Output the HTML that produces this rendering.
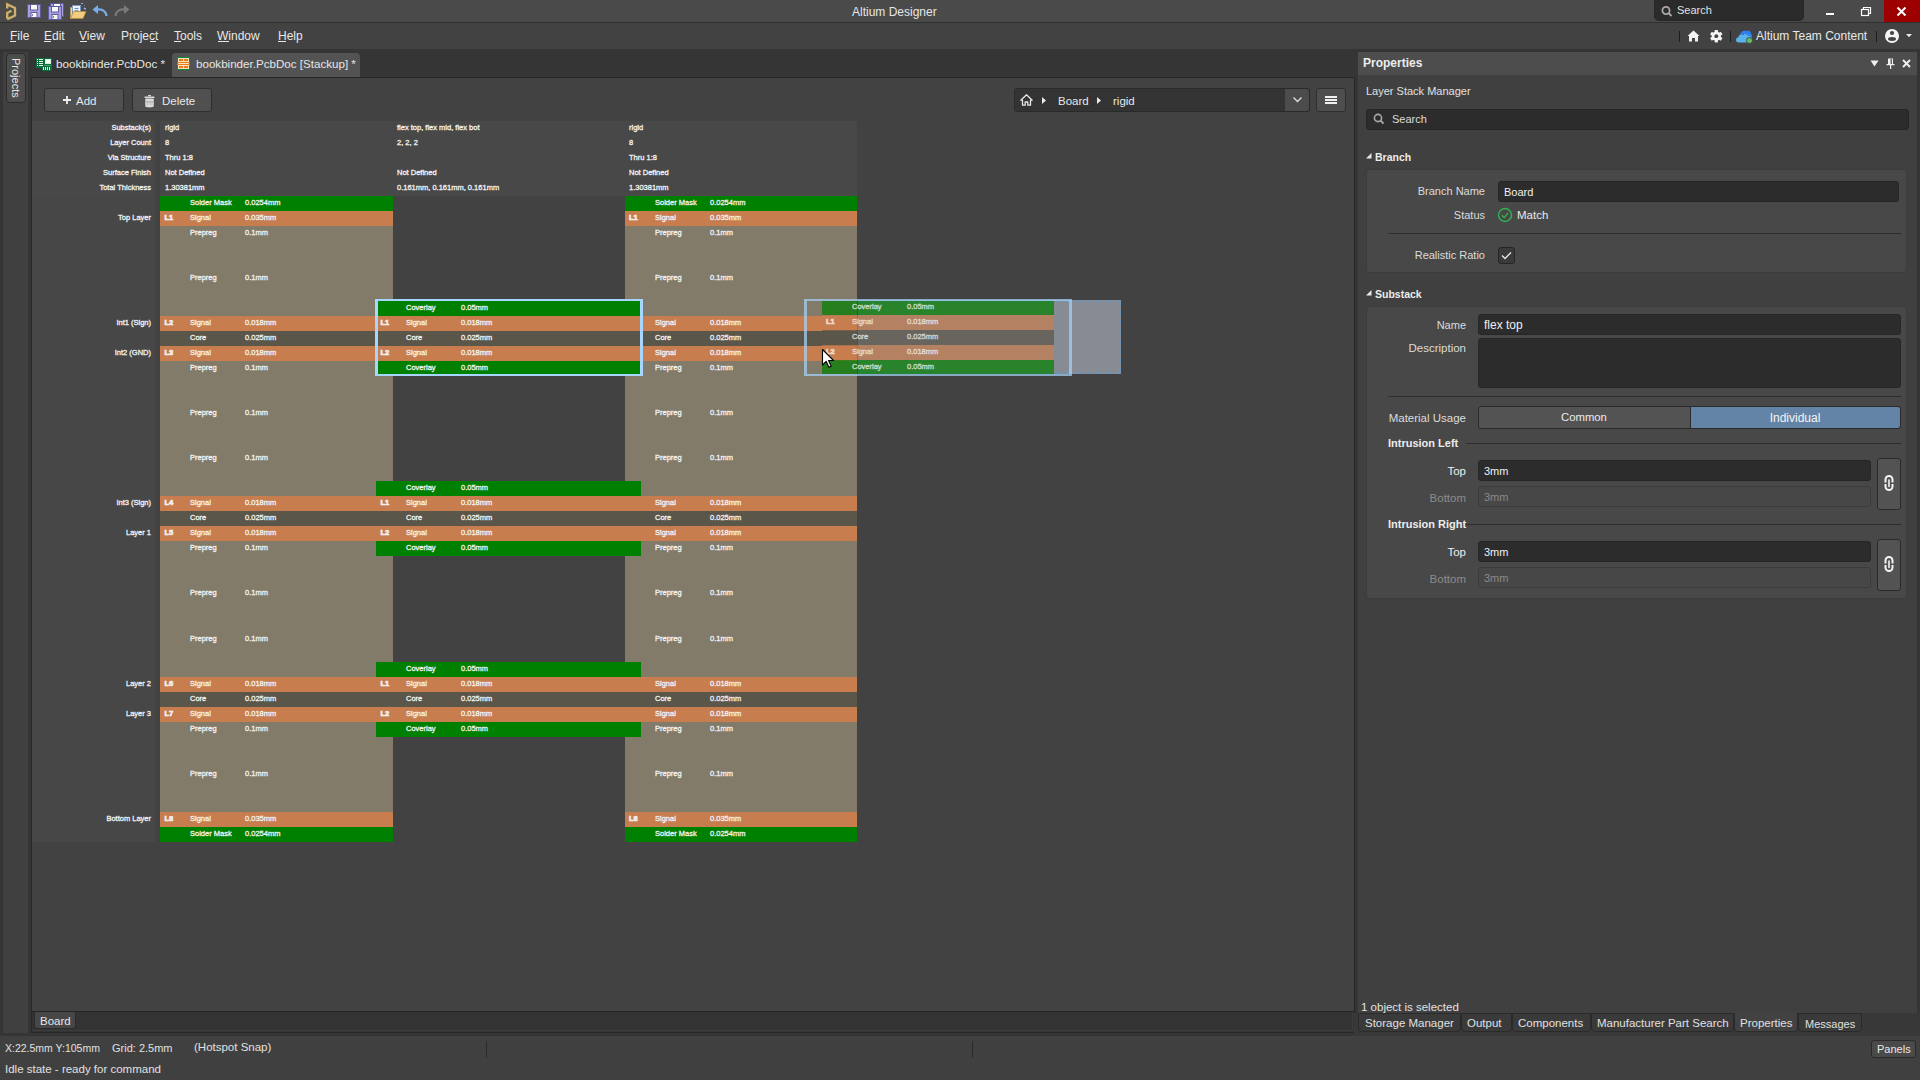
<!DOCTYPE html><html><head><meta charset="utf-8"><title>Altium Designer</title><style>
html,body{margin:0;padding:0;width:1920px;height:1080px;overflow:hidden;background:#3c3c3c;font-family:"Liberation Sans",sans-serif;}
.t{position:absolute;white-space:pre;}
.r{position:absolute;box-sizing:border-box;}
svg{position:absolute;overflow:visible;}
</style></head><body>
<div class="r" style="left:0px;top:0px;width:1920px;height:22px;background:#4a4a4a;"></div>
<div class="r" style="left:0px;top:22px;width:1920px;height:1px;background:#2f2f2f;"></div>
<div class="t" style="left:852px;top:4.64px;font-size:12px;line-height:14.4px;color:#e6e6e6;">Altium Designer</div>
<div class="r" style="left:1654px;top:0px;width:150px;height:21px;background:#2b2b2b;border-radius:0 0 5px 5px;border:1px solid #262626;border-top:none;"></div>
<svg style="left:1661px;top:6px" width="12" height="11"><circle cx="5" cy="4.5" r="3.6" fill="none" stroke="#a8a8a8" stroke-width="1.8"/><line x1="7.5" y1="7" x2="10.5" y2="10" stroke="#a8a8a8" stroke-width="2"/></svg>
<div class="t" style="left:1677px;top:3.59px;font-size:11px;line-height:13.2px;color:#e0e0e0;">Search</div>
<div class="r" style="left:1826px;top:13px;width:8px;height:2px;background:#ffffff;"></div>
<svg style="left:1860px;top:5px" width="12" height="12"><rect x="1.5" y="4.5" width="7" height="6" fill="none" stroke="#fff" stroke-width="1.2"/><path d="M3.5 4.5V2.5H10.5V8.5H8.5" fill="none" stroke="#fff" stroke-width="1.2"/></svg>
<div class="r" style="left:1884px;top:0px;width:36px;height:22px;background:#9c0000;"></div>
<svg style="left:1896px;top:6px" width="11" height="11"><path d="M1.5 1.5L9.5 9.5M9.5 1.5L1.5 9.5" stroke="#fff" stroke-width="2"/></svg>
<svg style="left:5px;top:2px" width="13" height="19"><path d="M2.2 6.5V2.3L10 6V13.5L3.2 16.8L2.2 15.5V11L6.5 8.8" fill="none" stroke="#cdb06a" stroke-width="2.4" stroke-linejoin="miter"/></svg>
<svg style="left:27px;top:4px" width="14" height="14"><rect x="0.5" y="0.5" width="13" height="13" fill="#a89ee0" stroke="#5c5c98"/><rect x="3.5" y="0.5" width="7" height="5.5" fill="#f8f8f8" stroke="#5c5c98"/><rect x="4" y="8.5" width="6" height="5" fill="#f8f8f8" stroke="#5c5c98"/><rect x="5" y="10" width="1" height="2" fill="#7a7aa8"/></svg>
<svg style="left:50px;top:3px" width="14" height="14"><rect x="0.5" y="0.5" width="13" height="13" fill="#a89ee0" stroke="#5c5c98"/><rect x="3.5" y="0.5" width="7" height="5.5" fill="#f8f8f8" stroke="#5c5c98"/><rect x="4" y="8.5" width="6" height="5" fill="#f8f8f8" stroke="#5c5c98"/><rect x="5" y="10" width="1" height="2" fill="#7a7aa8"/></svg>
<svg style="left:48px;top:6px" width="14" height="14"><rect x="0.5" y="0.5" width="13" height="13" fill="#a89ee0" stroke="#5c5c98"/><rect x="3.5" y="0.5" width="7" height="5.5" fill="#f8f8f8" stroke="#5c5c98"/><rect x="4" y="8.5" width="6" height="5" fill="#f8f8f8" stroke="#5c5c98"/><rect x="5" y="10" width="1" height="2" fill="#7a7aa8"/></svg>
<svg style="left:70px;top:3px" width="17" height="16"><path d="M0.5 4.5H3V15.5H0.5Z" fill="#e8d8a8" stroke="#c0a060" stroke-width="0.6"/><rect x="2.5" y="2.5" width="8" height="9" fill="#f4f6fa" stroke="#7c96c0" stroke-width="1"/><line x1="4.5" y1="5.5" x2="8.5" y2="5.5" stroke="#6a88b8" stroke-width="1.2"/><line x1="4.5" y1="7.8" x2="8.5" y2="7.8" stroke="#6a88b8" stroke-width="1.2"/><path d="M0.5 15.5L3.5 8.5H16L13 15.5Z" fill="#f2cc80" stroke="#b88a38" stroke-width="0.8"/><path d="M11 0.5H13M14 2L14.5 2.5M14.5 4.5L15 6.5L14 5.5L16 5.5" stroke="#8fb4dc" stroke-width="1"/></svg>
<svg style="left:92px;top:4px" width="16" height="13"><path d="M14.5 12C14 7 10 5 5 5.5" fill="none" stroke="#78aee8" stroke-width="2.2"/><path d="M0.5 5.5L6 1V10Z" fill="#78aee8"/></svg>
<svg style="left:114px;top:4px" width="16" height="13"><path d="M1.5 12C2 7 6 5 11 5.5" fill="none" stroke="#7a7a7a" stroke-width="2.2"/><path d="M15.5 5.5L10 1V10Z" fill="#7a7a7a"/></svg>
<div class="r" style="left:0px;top:23px;width:1920px;height:26px;background:#424242;"></div>
<div class="t" style="left:10px;top:28.64px;font-size:12px;line-height:14.4px;color:#e8e8e8;">File</div>
<div class="t" style="left:44px;top:28.64px;font-size:12px;line-height:14.4px;color:#e8e8e8;">Edit</div>
<div class="t" style="left:79px;top:28.64px;font-size:12px;line-height:14.4px;color:#e8e8e8;">View</div>
<div class="t" style="left:121px;top:28.64px;font-size:12px;line-height:14.4px;color:#e8e8e8;">Project</div>
<div class="t" style="left:174px;top:28.64px;font-size:12px;line-height:14.4px;color:#e8e8e8;">Tools</div>
<div class="t" style="left:217px;top:28.64px;font-size:12px;line-height:14.4px;color:#e8e8e8;">Window</div>
<div class="t" style="left:278px;top:28.64px;font-size:12px;line-height:14.4px;color:#e8e8e8;">Help</div>
<div class="r" style="left:10px;top:41px;width:6px;height:1px;background:#e8e8e8;"></div>
<div class="r" style="left:44px;top:41px;width:7px;height:1px;background:#e8e8e8;"></div>
<div class="r" style="left:80px;top:41px;width:7px;height:1px;background:#e8e8e8;"></div>
<div class="r" style="left:174px;top:41px;width:7px;height:1px;background:#e8e8e8;"></div>
<div class="r" style="left:218px;top:41px;width:11px;height:1px;background:#e8e8e8;"></div>
<div class="r" style="left:278px;top:41px;width:8px;height:1px;background:#e8e8e8;"></div>
<div class="r" style="left:150px;top:41px;width:6px;height:1px;background:#e8e8e8;"></div>
<div class="r" style="left:1679px;top:31px;width:1px;height:11px;background:#1c1c1c;"></div>
<div class="r" style="left:1730px;top:31px;width:1px;height:11px;background:#1c1c1c;"></div>
<div class="r" style="left:1876px;top:31px;width:1px;height:11px;background:#1c1c1c;"></div>
<svg style="left:1687px;top:30px" width="13" height="12"><path d="M6.5 0.5L0.5 6H2V11.5H5V8H8V11.5H11V6H12.5Z" fill="#f2f2f2"/></svg>
<svg style="left:1709px;top:29px" width="15" height="15"><g fill="#f4f4f4" transform="translate(7.3 7.2)"><circle r="4.6"/><rect x="-1.6" y="-6.2" width="3.2" height="12.4"/><rect x="-1.6" y="-6.2" width="3.2" height="12.4" transform="rotate(60)"/><rect x="-1.6" y="-6.2" width="3.2" height="12.4" transform="rotate(-60)"/></g><circle cx="7.3" cy="7.2" r="1.9" fill="#424242"/></svg>
<svg style="left:1735px;top:29px" width="18" height="15"><path d="M3.5 13.5C0.3 13.5 0.2 8.6 3.4 8.3C3.8 5.6 6.5 4.6 8.5 6C9.5 2.2 14 1.5 15.5 5C16.8 6 17.2 8 16.8 9.5L15.5 13.5Z" fill="#5ab2ec"/><path d="M5 5.3C6 2.5 9 0.8 11 2.2C13 0.5 16 2 16.3 5.2C17.5 6 17.3 8.5 16.5 9.5C15.8 7 14 6 12.5 6.5C11.5 4.8 9 4.5 8 6C7 5.3 6 5.2 5 5.3Z" fill="#2f7ef2"/><circle cx="14.5" cy="11.5" r="3" fill="#5cc060" stroke="#424242" stroke-width="0.9"/></svg>
<div class="t" style="left:1756px;top:28.64px;font-size:12px;line-height:14.4px;color:#e8e8e8;">Altium Team Content</div>
<svg style="left:1884px;top:28px" width="16" height="16"><circle cx="8" cy="8" r="7" fill="#f4f4f4"/><circle cx="8" cy="5" r="2.1" fill="#424242"/><ellipse cx="8" cy="11" rx="4" ry="1.9" fill="#424242"/></svg>
<svg style="left:1906px;top:34px" width="7" height="4"><path d="M0 0H6L3 3.2Z" fill="#e8e8e8"/></svg>
<div class="r" style="left:0px;top:49px;width:1920px;height:987px;background:#353535;"></div>
<div class="r" style="left:3px;top:52px;width:25px;height:981px;background:#404040;"></div>
<div class="r" style="left:6px;top:53px;width:20px;height:50px;background:#4d4d4d;border-radius:4px;border:1px solid #2c2c2c;"></div>
<div class="t" style="left:8px;top:58px;width:16px;height:44px;"><div style="position:absolute;left:0;top:0;transform-origin:0 0;transform:translate(15px,0) rotate(90deg);font-size:11px;line-height:14px;color:#e6e6e6;white-space:pre">Projects</div></div>
<svg style="left:36px;top:58px" width="16" height="13" shape-rendering="crispEdges"><path d="M0 0H16V13H6V10H0Z" fill="#0b6c3c"/><g fill="#eef6f0"><rect x="1" y="1" width="1" height="1"/><rect x="3" y="1" width="4" height="1"/><rect x="1" y="3" width="1" height="1"/><rect x="3" y="3" width="4" height="1"/><rect x="1" y="5" width="1" height="1"/><rect x="3" y="5" width="4" height="1"/><rect x="1" y="7" width="1" height="1"/><rect x="3" y="7" width="4" height="1"/></g><rect x="9" y="1" width="6" height="5" fill="#d8eee0"/><rect x="10" y="2" width="4" height="3" fill="#f4fbf6"/><rect x="8" y="7" width="7" height="1" fill="#3aa070"/><g fill="#f4f0c8"><rect x="7" y="9" width="1" height="3"/><rect x="9" y="9" width="1" height="3"/><rect x="11" y="9" width="1" height="3"/><rect x="13" y="9" width="1" height="3"/></g></svg>
<div class="t" style="left:56px;top:56.93px;font-size:11.7px;line-height:14.04px;color:#e6e6e6;">bookbinder.PcbDoc *</div>
<div class="r" style="left:172px;top:53px;width:188px;height:24px;background:#535353;border-radius:4px 4px 0 0;"></div>
<svg style="left:177px;top:57px" width="13" height="13"><rect x="0" y="0" width="13" height="13" fill="#0e8a3a"/><rect x="1" y="1" width="11" height="11" fill="#f4e6b8"/><rect x="2" y="2" width="4" height="2" fill="#f07a20"/><rect x="7" y="2" width="4" height="2" fill="#f07a20"/><rect x="0" y="5" width="13" height="1" fill="#f07a20"/><rect x="0" y="7" width="13" height="1" fill="#f07a20"/><rect x="2" y="9" width="4" height="2" fill="#f07a20"/><rect x="7" y="9" width="4" height="2" fill="#f07a20"/></svg>
<div class="t" style="left:196px;top:57.02px;font-size:11.6px;line-height:13.92px;color:#e6e6e6;">bookbinder.PcbDoc [Stackup] *</div>
<div class="r" style="left:31px;top:77px;width:1324px;height:956px;background:#262626;"></div>
<div class="r" style="left:32px;top:78px;width:1322px;height:933px;background:#424242;"></div>
<div class="r" style="left:44px;top:88px;width:80px;height:24px;background:#505050;border:1px solid #2f2f2f;border-radius:3px;"></div>
<svg style="left:63px;top:96px" width="8" height="8"><path d="M4 0V8M0 4H8" stroke="#f0f0f0" stroke-width="1.8"/></svg>
<div class="t" style="left:76px;top:95.12px;font-size:11.5px;line-height:13.8px;color:#e8e8e8;">Add</div>
<div class="r" style="left:132px;top:88px;width:80px;height:24px;background:#505050;border:1px solid #2f2f2f;border-radius:3px;"></div>
<svg style="left:144px;top:94px" width="11" height="14"><path d="M4 1H7V2.2H4Z" fill="#d8d8d8"/><rect x="0.5" y="2.5" width="10" height="1.6" rx="0.6" fill="#d8d8d8"/><path d="M1.5 4.6H9.5C10 6.5 10 10.5 9.5 12.8C8 13.6 3 13.6 1.5 12.8C1 10.5 1 6.5 1.5 4.6Z" fill="#dcdcdc"/><rect x="1.2" y="7.2" width="8.6" height="1.3" fill="#a8a8a8"/><rect x="1.2" y="9.6" width="8.6" height="0.9" fill="#bdbdbd"/></svg>
<div class="t" style="left:162px;top:95.12px;font-size:11.5px;line-height:13.8px;color:#e8e8e8;">Delete</div>
<div class="r" style="left:1014px;top:88px;width:296px;height:24px;background:#333333;border:1px solid #2a2a2a;border-radius:3px;"></div>
<div class="r" style="left:1285px;top:89px;width:24px;height:22px;background:#4c4c4c;border-radius:0 3px 3px 0;"></div>
<svg style="left:1293px;top:97px" width="10" height="6"><path d="M0.5 0.5L4.5 4.5L8.5 0.5" fill="none" stroke="#e0e0e0" stroke-width="1.3"/></svg>
<svg style="left:1020px;top:94px" width="13" height="12"><path d="M6.5 0.8L0.8 6.2H2.5V11.2H5.2V8H7.8V11.2H10.5V6.2H12.2Z" fill="none" stroke="#e8e8e8" stroke-width="1.3" stroke-linejoin="round"/></svg>
<svg style="left:1042px;top:97px" width="4" height="7"><path d="M0 0L4 3.5L0 7Z" fill="#e8e8e8"/></svg>
<div class="t" style="left:1058px;top:95.12px;font-size:11.5px;line-height:13.8px;color:#e8e8e8;">Board</div>
<svg style="left:1097px;top:97px" width="4" height="7"><path d="M0 0L4 3.5L0 7Z" fill="#e8e8e8"/></svg>
<div class="t" style="left:1113px;top:95.12px;font-size:11.5px;line-height:13.8px;color:#e8e8e8;">rigid</div>
<div class="r" style="left:1316px;top:88px;width:30px;height:24px;background:#4e4e4e;border:1px solid #2e2e2e;border-radius:3px;"></div>
<div class="r" style="left:1325px;top:96px;width:12px;height:2px;background:#f0f0f0;"></div>
<div class="r" style="left:1325px;top:99px;width:12px;height:2px;background:#f0f0f0;"></div>
<div class="r" style="left:1325px;top:102px;width:12px;height:2px;background:#f0f0f0;"></div>
<div class="r" style="left:32px;top:121px;width:825px;height:75px;background:#484848;"></div>
<div class="r" style="left:155px;top:121px;width:5px;height:75px;background:#424242;"></div>
<div class="r" style="left:32px;top:196px;width:123px;height:646px;background:#474747;"></div>
<div class="t" style="right:1769px;top:122.90px;font-size:7.5px;line-height:9.0px;color:#f2f2f2;-webkit-text-stroke:0.3px #f2f2f2;">Substack(s)</div>
<div class="t" style="left:165px;top:122.90px;font-size:7.5px;line-height:9.0px;color:#f2f2f2;-webkit-text-stroke:0.3px #f2f2f2;">rigid</div>
<div class="t" style="left:397px;top:122.90px;font-size:7.5px;line-height:9.0px;color:#f2f2f2;-webkit-text-stroke:0.3px #f2f2f2;">flex top, flex mid, flex bot</div>
<div class="t" style="left:629px;top:122.90px;font-size:7.5px;line-height:9.0px;color:#f2f2f2;-webkit-text-stroke:0.3px #f2f2f2;">rigid</div>
<div class="t" style="right:1769px;top:137.90px;font-size:7.5px;line-height:9.0px;color:#f2f2f2;-webkit-text-stroke:0.3px #f2f2f2;">Layer Count</div>
<div class="t" style="left:165px;top:137.90px;font-size:7.5px;line-height:9.0px;color:#f2f2f2;-webkit-text-stroke:0.3px #f2f2f2;">8</div>
<div class="t" style="left:397px;top:137.90px;font-size:7.5px;line-height:9.0px;color:#f2f2f2;-webkit-text-stroke:0.3px #f2f2f2;">2, 2, 2</div>
<div class="t" style="left:629px;top:137.90px;font-size:7.5px;line-height:9.0px;color:#f2f2f2;-webkit-text-stroke:0.3px #f2f2f2;">8</div>
<div class="t" style="right:1769px;top:152.90px;font-size:7.5px;line-height:9.0px;color:#f2f2f2;-webkit-text-stroke:0.3px #f2f2f2;">Via Structure</div>
<div class="t" style="left:165px;top:152.90px;font-size:7.5px;line-height:9.0px;color:#f2f2f2;-webkit-text-stroke:0.3px #f2f2f2;">Thru 1:8</div>
<div class="t" style="left:629px;top:152.90px;font-size:7.5px;line-height:9.0px;color:#f2f2f2;-webkit-text-stroke:0.3px #f2f2f2;">Thru 1:8</div>
<div class="t" style="right:1769px;top:167.90px;font-size:7.5px;line-height:9.0px;color:#f2f2f2;-webkit-text-stroke:0.3px #f2f2f2;">Surface Finish</div>
<div class="t" style="left:165px;top:167.90px;font-size:7.5px;line-height:9.0px;color:#f2f2f2;-webkit-text-stroke:0.3px #f2f2f2;">Not Defined</div>
<div class="t" style="left:397px;top:167.90px;font-size:7.5px;line-height:9.0px;color:#f2f2f2;-webkit-text-stroke:0.3px #f2f2f2;">Not Defined</div>
<div class="t" style="left:629px;top:167.90px;font-size:7.5px;line-height:9.0px;color:#f2f2f2;-webkit-text-stroke:0.3px #f2f2f2;">Not Defined</div>
<div class="t" style="right:1769px;top:182.90px;font-size:7.5px;line-height:9.0px;color:#f2f2f2;-webkit-text-stroke:0.3px #f2f2f2;">Total Thickness</div>
<div class="t" style="left:165px;top:182.90px;font-size:7.5px;line-height:9.0px;color:#f2f2f2;-webkit-text-stroke:0.3px #f2f2f2;">1.30381mm</div>
<div class="t" style="left:397px;top:182.90px;font-size:7.5px;line-height:9.0px;color:#f2f2f2;-webkit-text-stroke:0.3px #f2f2f2;">0.161mm, 0.161mm, 0.161mm</div>
<div class="t" style="left:629px;top:182.90px;font-size:7.5px;line-height:9.0px;color:#f2f2f2;-webkit-text-stroke:0.3px #f2f2f2;">1.30381mm</div>
<div class="r" style="left:858px;top:300px;width:263px;height:74px;background:#878b93;border:2px dashed #7393b3;"></div>
<div class="r" style="left:160px;top:196px;width:233px;height:15px;background:#008000;"></div>
<div class="r" style="left:625px;top:196px;width:232px;height:15px;background:#008000;"></div>
<div class="r" style="left:160px;top:211px;width:233px;height:15px;background:#c87d4e;"></div>
<div class="r" style="left:625px;top:211px;width:232px;height:15px;background:#c87d4e;"></div>
<div class="r" style="left:160px;top:226px;width:233px;height:45px;background:#827b69;"></div>
<div class="r" style="left:625px;top:226px;width:232px;height:45px;background:#827b69;"></div>
<div class="r" style="left:160px;top:271px;width:233px;height:45px;background:#827b69;"></div>
<div class="r" style="left:625px;top:271px;width:232px;height:45px;background:#827b69;"></div>
<div class="r" style="left:160px;top:316px;width:697px;height:15px;background:#c87d4e;"></div>
<div class="r" style="left:160px;top:331px;width:697px;height:15px;background:#5a5649;"></div>
<div class="r" style="left:160px;top:346px;width:697px;height:15px;background:#c87d4e;"></div>
<div class="r" style="left:160px;top:361px;width:233px;height:45px;background:#827b69;"></div>
<div class="r" style="left:625px;top:361px;width:232px;height:45px;background:#827b69;"></div>
<div class="r" style="left:160px;top:406px;width:233px;height:45px;background:#827b69;"></div>
<div class="r" style="left:625px;top:406px;width:232px;height:45px;background:#827b69;"></div>
<div class="r" style="left:160px;top:451px;width:233px;height:45px;background:#827b69;"></div>
<div class="r" style="left:625px;top:451px;width:232px;height:45px;background:#827b69;"></div>
<div class="r" style="left:160px;top:496px;width:697px;height:15px;background:#c87d4e;"></div>
<div class="r" style="left:160px;top:511px;width:697px;height:15px;background:#5a5649;"></div>
<div class="r" style="left:160px;top:526px;width:697px;height:15px;background:#c87d4e;"></div>
<div class="r" style="left:160px;top:541px;width:233px;height:45px;background:#827b69;"></div>
<div class="r" style="left:625px;top:541px;width:232px;height:45px;background:#827b69;"></div>
<div class="r" style="left:160px;top:586px;width:233px;height:46px;background:#827b69;"></div>
<div class="r" style="left:625px;top:586px;width:232px;height:46px;background:#827b69;"></div>
<div class="r" style="left:160px;top:632px;width:233px;height:45px;background:#827b69;"></div>
<div class="r" style="left:625px;top:632px;width:232px;height:45px;background:#827b69;"></div>
<div class="r" style="left:160px;top:677px;width:697px;height:15px;background:#c87d4e;"></div>
<div class="r" style="left:160px;top:692px;width:697px;height:15px;background:#5a5649;"></div>
<div class="r" style="left:160px;top:707px;width:697px;height:15px;background:#c87d4e;"></div>
<div class="r" style="left:160px;top:722px;width:233px;height:45px;background:#827b69;"></div>
<div class="r" style="left:625px;top:722px;width:232px;height:45px;background:#827b69;"></div>
<div class="r" style="left:160px;top:767px;width:233px;height:45px;background:#827b69;"></div>
<div class="r" style="left:625px;top:767px;width:232px;height:45px;background:#827b69;"></div>
<div class="r" style="left:160px;top:812px;width:233px;height:15px;background:#c87d4e;"></div>
<div class="r" style="left:625px;top:812px;width:232px;height:15px;background:#c87d4e;"></div>
<div class="r" style="left:160px;top:827px;width:233px;height:15px;background:#008000;"></div>
<div class="r" style="left:625px;top:827px;width:232px;height:15px;background:#008000;"></div>
<div class="r" style="left:376px;top:301px;width:265px;height:15px;background:#008000;"></div>
<div class="r" style="left:376px;top:361px;width:265px;height:15px;background:#008000;"></div>
<div class="r" style="left:376px;top:481px;width:265px;height:15px;background:#008000;"></div>
<div class="r" style="left:376px;top:541px;width:265px;height:15px;background:#008000;"></div>
<div class="r" style="left:376px;top:662px;width:265px;height:15px;background:#008000;"></div>
<div class="r" style="left:376px;top:722px;width:265px;height:15px;background:#008000;"></div>
<div class="t" style="left:190px;top:197.90px;font-size:7.5px;line-height:9.0px;color:#f2f2f2;-webkit-text-stroke:0.3px #f2f2f2;">Solder Mask</div>
<div class="t" style="left:245px;top:197.90px;font-size:7.5px;line-height:9.0px;color:#f2f2f2;-webkit-text-stroke:0.3px #f2f2f2;">0.0254mm</div>
<div class="t" style="left:655px;top:197.90px;font-size:7.5px;line-height:9.0px;color:#f2f2f2;-webkit-text-stroke:0.3px #f2f2f2;">Solder Mask</div>
<div class="t" style="left:710px;top:197.90px;font-size:7.5px;line-height:9.0px;color:#f2f2f2;-webkit-text-stroke:0.3px #f2f2f2;">0.0254mm</div>
<div class="t" style="left:164.5px;top:212.90px;font-size:7.5px;line-height:9.0px;font-weight:700;color:#f2f2f2;-webkit-text-stroke:0.6px #f2f2f2;">L1</div>
<div class="t" style="left:190px;top:212.90px;font-size:7.5px;line-height:9.0px;color:#f2f2f2;-webkit-text-stroke:0.3px #f2f2f2;">Signal</div>
<div class="t" style="left:245px;top:212.90px;font-size:7.5px;line-height:9.0px;color:#f2f2f2;-webkit-text-stroke:0.3px #f2f2f2;">0.035mm</div>
<div class="t" style="left:629px;top:212.90px;font-size:7.5px;line-height:9.0px;font-weight:700;color:#f2f2f2;-webkit-text-stroke:0.6px #f2f2f2;">L1</div>
<div class="t" style="left:655px;top:212.90px;font-size:7.5px;line-height:9.0px;color:#f2f2f2;-webkit-text-stroke:0.3px #f2f2f2;">Signal</div>
<div class="t" style="left:710px;top:212.90px;font-size:7.5px;line-height:9.0px;color:#f2f2f2;-webkit-text-stroke:0.3px #f2f2f2;">0.035mm</div>
<div class="t" style="left:190px;top:227.90px;font-size:7.5px;line-height:9.0px;color:#f2f2f2;-webkit-text-stroke:0.3px #f2f2f2;">Prepreg</div>
<div class="t" style="left:245px;top:227.90px;font-size:7.5px;line-height:9.0px;color:#f2f2f2;-webkit-text-stroke:0.3px #f2f2f2;">0.1mm</div>
<div class="t" style="left:655px;top:227.90px;font-size:7.5px;line-height:9.0px;color:#f2f2f2;-webkit-text-stroke:0.3px #f2f2f2;">Prepreg</div>
<div class="t" style="left:710px;top:227.90px;font-size:7.5px;line-height:9.0px;color:#f2f2f2;-webkit-text-stroke:0.3px #f2f2f2;">0.1mm</div>
<div class="t" style="left:190px;top:272.90px;font-size:7.5px;line-height:9.0px;color:#f2f2f2;-webkit-text-stroke:0.3px #f2f2f2;">Prepreg</div>
<div class="t" style="left:245px;top:272.90px;font-size:7.5px;line-height:9.0px;color:#f2f2f2;-webkit-text-stroke:0.3px #f2f2f2;">0.1mm</div>
<div class="t" style="left:655px;top:272.90px;font-size:7.5px;line-height:9.0px;color:#f2f2f2;-webkit-text-stroke:0.3px #f2f2f2;">Prepreg</div>
<div class="t" style="left:710px;top:272.90px;font-size:7.5px;line-height:9.0px;color:#f2f2f2;-webkit-text-stroke:0.3px #f2f2f2;">0.1mm</div>
<div class="t" style="left:164.5px;top:317.90px;font-size:7.5px;line-height:9.0px;font-weight:700;color:#f2f2f2;-webkit-text-stroke:0.6px #f2f2f2;">L2</div>
<div class="t" style="left:190px;top:317.90px;font-size:7.5px;line-height:9.0px;color:#f2f2f2;-webkit-text-stroke:0.3px #f2f2f2;">Signal</div>
<div class="t" style="left:245px;top:317.90px;font-size:7.5px;line-height:9.0px;color:#f2f2f2;-webkit-text-stroke:0.3px #f2f2f2;">0.018mm</div>
<div class="t" style="left:655px;top:317.90px;font-size:7.5px;line-height:9.0px;color:#f2f2f2;-webkit-text-stroke:0.3px #f2f2f2;">Signal</div>
<div class="t" style="left:710px;top:317.90px;font-size:7.5px;line-height:9.0px;color:#f2f2f2;-webkit-text-stroke:0.3px #f2f2f2;">0.018mm</div>
<div class="t" style="left:190px;top:332.90px;font-size:7.5px;line-height:9.0px;color:#f2f2f2;-webkit-text-stroke:0.3px #f2f2f2;">Core</div>
<div class="t" style="left:245px;top:332.90px;font-size:7.5px;line-height:9.0px;color:#f2f2f2;-webkit-text-stroke:0.3px #f2f2f2;">0.025mm</div>
<div class="t" style="left:655px;top:332.90px;font-size:7.5px;line-height:9.0px;color:#f2f2f2;-webkit-text-stroke:0.3px #f2f2f2;">Core</div>
<div class="t" style="left:710px;top:332.90px;font-size:7.5px;line-height:9.0px;color:#f2f2f2;-webkit-text-stroke:0.3px #f2f2f2;">0.025mm</div>
<div class="t" style="left:164.5px;top:347.90px;font-size:7.5px;line-height:9.0px;font-weight:700;color:#f2f2f2;-webkit-text-stroke:0.6px #f2f2f2;">L3</div>
<div class="t" style="left:190px;top:347.90px;font-size:7.5px;line-height:9.0px;color:#f2f2f2;-webkit-text-stroke:0.3px #f2f2f2;">Signal</div>
<div class="t" style="left:245px;top:347.90px;font-size:7.5px;line-height:9.0px;color:#f2f2f2;-webkit-text-stroke:0.3px #f2f2f2;">0.018mm</div>
<div class="t" style="left:655px;top:347.90px;font-size:7.5px;line-height:9.0px;color:#f2f2f2;-webkit-text-stroke:0.3px #f2f2f2;">Signal</div>
<div class="t" style="left:710px;top:347.90px;font-size:7.5px;line-height:9.0px;color:#f2f2f2;-webkit-text-stroke:0.3px #f2f2f2;">0.018mm</div>
<div class="t" style="left:190px;top:362.90px;font-size:7.5px;line-height:9.0px;color:#f2f2f2;-webkit-text-stroke:0.3px #f2f2f2;">Prepreg</div>
<div class="t" style="left:245px;top:362.90px;font-size:7.5px;line-height:9.0px;color:#f2f2f2;-webkit-text-stroke:0.3px #f2f2f2;">0.1mm</div>
<div class="t" style="left:655px;top:362.90px;font-size:7.5px;line-height:9.0px;color:#f2f2f2;-webkit-text-stroke:0.3px #f2f2f2;">Prepreg</div>
<div class="t" style="left:710px;top:362.90px;font-size:7.5px;line-height:9.0px;color:#f2f2f2;-webkit-text-stroke:0.3px #f2f2f2;">0.1mm</div>
<div class="t" style="left:190px;top:407.90px;font-size:7.5px;line-height:9.0px;color:#f2f2f2;-webkit-text-stroke:0.3px #f2f2f2;">Prepreg</div>
<div class="t" style="left:245px;top:407.90px;font-size:7.5px;line-height:9.0px;color:#f2f2f2;-webkit-text-stroke:0.3px #f2f2f2;">0.1mm</div>
<div class="t" style="left:655px;top:407.90px;font-size:7.5px;line-height:9.0px;color:#f2f2f2;-webkit-text-stroke:0.3px #f2f2f2;">Prepreg</div>
<div class="t" style="left:710px;top:407.90px;font-size:7.5px;line-height:9.0px;color:#f2f2f2;-webkit-text-stroke:0.3px #f2f2f2;">0.1mm</div>
<div class="t" style="left:190px;top:452.90px;font-size:7.5px;line-height:9.0px;color:#f2f2f2;-webkit-text-stroke:0.3px #f2f2f2;">Prepreg</div>
<div class="t" style="left:245px;top:452.90px;font-size:7.5px;line-height:9.0px;color:#f2f2f2;-webkit-text-stroke:0.3px #f2f2f2;">0.1mm</div>
<div class="t" style="left:655px;top:452.90px;font-size:7.5px;line-height:9.0px;color:#f2f2f2;-webkit-text-stroke:0.3px #f2f2f2;">Prepreg</div>
<div class="t" style="left:710px;top:452.90px;font-size:7.5px;line-height:9.0px;color:#f2f2f2;-webkit-text-stroke:0.3px #f2f2f2;">0.1mm</div>
<div class="t" style="left:164.5px;top:497.90px;font-size:7.5px;line-height:9.0px;font-weight:700;color:#f2f2f2;-webkit-text-stroke:0.6px #f2f2f2;">L4</div>
<div class="t" style="left:190px;top:497.90px;font-size:7.5px;line-height:9.0px;color:#f2f2f2;-webkit-text-stroke:0.3px #f2f2f2;">Signal</div>
<div class="t" style="left:245px;top:497.90px;font-size:7.5px;line-height:9.0px;color:#f2f2f2;-webkit-text-stroke:0.3px #f2f2f2;">0.018mm</div>
<div class="t" style="left:655px;top:497.90px;font-size:7.5px;line-height:9.0px;color:#f2f2f2;-webkit-text-stroke:0.3px #f2f2f2;">Signal</div>
<div class="t" style="left:710px;top:497.90px;font-size:7.5px;line-height:9.0px;color:#f2f2f2;-webkit-text-stroke:0.3px #f2f2f2;">0.018mm</div>
<div class="t" style="left:190px;top:512.90px;font-size:7.5px;line-height:9.0px;color:#f2f2f2;-webkit-text-stroke:0.3px #f2f2f2;">Core</div>
<div class="t" style="left:245px;top:512.90px;font-size:7.5px;line-height:9.0px;color:#f2f2f2;-webkit-text-stroke:0.3px #f2f2f2;">0.025mm</div>
<div class="t" style="left:655px;top:512.90px;font-size:7.5px;line-height:9.0px;color:#f2f2f2;-webkit-text-stroke:0.3px #f2f2f2;">Core</div>
<div class="t" style="left:710px;top:512.90px;font-size:7.5px;line-height:9.0px;color:#f2f2f2;-webkit-text-stroke:0.3px #f2f2f2;">0.025mm</div>
<div class="t" style="left:164.5px;top:527.90px;font-size:7.5px;line-height:9.0px;font-weight:700;color:#f2f2f2;-webkit-text-stroke:0.6px #f2f2f2;">L5</div>
<div class="t" style="left:190px;top:527.90px;font-size:7.5px;line-height:9.0px;color:#f2f2f2;-webkit-text-stroke:0.3px #f2f2f2;">Signal</div>
<div class="t" style="left:245px;top:527.90px;font-size:7.5px;line-height:9.0px;color:#f2f2f2;-webkit-text-stroke:0.3px #f2f2f2;">0.018mm</div>
<div class="t" style="left:655px;top:527.90px;font-size:7.5px;line-height:9.0px;color:#f2f2f2;-webkit-text-stroke:0.3px #f2f2f2;">Signal</div>
<div class="t" style="left:710px;top:527.90px;font-size:7.5px;line-height:9.0px;color:#f2f2f2;-webkit-text-stroke:0.3px #f2f2f2;">0.018mm</div>
<div class="t" style="left:190px;top:542.90px;font-size:7.5px;line-height:9.0px;color:#f2f2f2;-webkit-text-stroke:0.3px #f2f2f2;">Prepreg</div>
<div class="t" style="left:245px;top:542.90px;font-size:7.5px;line-height:9.0px;color:#f2f2f2;-webkit-text-stroke:0.3px #f2f2f2;">0.1mm</div>
<div class="t" style="left:655px;top:542.90px;font-size:7.5px;line-height:9.0px;color:#f2f2f2;-webkit-text-stroke:0.3px #f2f2f2;">Prepreg</div>
<div class="t" style="left:710px;top:542.90px;font-size:7.5px;line-height:9.0px;color:#f2f2f2;-webkit-text-stroke:0.3px #f2f2f2;">0.1mm</div>
<div class="t" style="left:190px;top:587.90px;font-size:7.5px;line-height:9.0px;color:#f2f2f2;-webkit-text-stroke:0.3px #f2f2f2;">Prepreg</div>
<div class="t" style="left:245px;top:587.90px;font-size:7.5px;line-height:9.0px;color:#f2f2f2;-webkit-text-stroke:0.3px #f2f2f2;">0.1mm</div>
<div class="t" style="left:655px;top:587.90px;font-size:7.5px;line-height:9.0px;color:#f2f2f2;-webkit-text-stroke:0.3px #f2f2f2;">Prepreg</div>
<div class="t" style="left:710px;top:587.90px;font-size:7.5px;line-height:9.0px;color:#f2f2f2;-webkit-text-stroke:0.3px #f2f2f2;">0.1mm</div>
<div class="t" style="left:190px;top:633.90px;font-size:7.5px;line-height:9.0px;color:#f2f2f2;-webkit-text-stroke:0.3px #f2f2f2;">Prepreg</div>
<div class="t" style="left:245px;top:633.90px;font-size:7.5px;line-height:9.0px;color:#f2f2f2;-webkit-text-stroke:0.3px #f2f2f2;">0.1mm</div>
<div class="t" style="left:655px;top:633.90px;font-size:7.5px;line-height:9.0px;color:#f2f2f2;-webkit-text-stroke:0.3px #f2f2f2;">Prepreg</div>
<div class="t" style="left:710px;top:633.90px;font-size:7.5px;line-height:9.0px;color:#f2f2f2;-webkit-text-stroke:0.3px #f2f2f2;">0.1mm</div>
<div class="t" style="left:164.5px;top:678.90px;font-size:7.5px;line-height:9.0px;font-weight:700;color:#f2f2f2;-webkit-text-stroke:0.6px #f2f2f2;">L6</div>
<div class="t" style="left:190px;top:678.90px;font-size:7.5px;line-height:9.0px;color:#f2f2f2;-webkit-text-stroke:0.3px #f2f2f2;">Signal</div>
<div class="t" style="left:245px;top:678.90px;font-size:7.5px;line-height:9.0px;color:#f2f2f2;-webkit-text-stroke:0.3px #f2f2f2;">0.018mm</div>
<div class="t" style="left:655px;top:678.90px;font-size:7.5px;line-height:9.0px;color:#f2f2f2;-webkit-text-stroke:0.3px #f2f2f2;">Signal</div>
<div class="t" style="left:710px;top:678.90px;font-size:7.5px;line-height:9.0px;color:#f2f2f2;-webkit-text-stroke:0.3px #f2f2f2;">0.018mm</div>
<div class="t" style="left:190px;top:693.90px;font-size:7.5px;line-height:9.0px;color:#f2f2f2;-webkit-text-stroke:0.3px #f2f2f2;">Core</div>
<div class="t" style="left:245px;top:693.90px;font-size:7.5px;line-height:9.0px;color:#f2f2f2;-webkit-text-stroke:0.3px #f2f2f2;">0.025mm</div>
<div class="t" style="left:655px;top:693.90px;font-size:7.5px;line-height:9.0px;color:#f2f2f2;-webkit-text-stroke:0.3px #f2f2f2;">Core</div>
<div class="t" style="left:710px;top:693.90px;font-size:7.5px;line-height:9.0px;color:#f2f2f2;-webkit-text-stroke:0.3px #f2f2f2;">0.025mm</div>
<div class="t" style="left:164.5px;top:708.90px;font-size:7.5px;line-height:9.0px;font-weight:700;color:#f2f2f2;-webkit-text-stroke:0.6px #f2f2f2;">L7</div>
<div class="t" style="left:190px;top:708.90px;font-size:7.5px;line-height:9.0px;color:#f2f2f2;-webkit-text-stroke:0.3px #f2f2f2;">Signal</div>
<div class="t" style="left:245px;top:708.90px;font-size:7.5px;line-height:9.0px;color:#f2f2f2;-webkit-text-stroke:0.3px #f2f2f2;">0.018mm</div>
<div class="t" style="left:655px;top:708.90px;font-size:7.5px;line-height:9.0px;color:#f2f2f2;-webkit-text-stroke:0.3px #f2f2f2;">Signal</div>
<div class="t" style="left:710px;top:708.90px;font-size:7.5px;line-height:9.0px;color:#f2f2f2;-webkit-text-stroke:0.3px #f2f2f2;">0.018mm</div>
<div class="t" style="left:190px;top:723.90px;font-size:7.5px;line-height:9.0px;color:#f2f2f2;-webkit-text-stroke:0.3px #f2f2f2;">Prepreg</div>
<div class="t" style="left:245px;top:723.90px;font-size:7.5px;line-height:9.0px;color:#f2f2f2;-webkit-text-stroke:0.3px #f2f2f2;">0.1mm</div>
<div class="t" style="left:655px;top:723.90px;font-size:7.5px;line-height:9.0px;color:#f2f2f2;-webkit-text-stroke:0.3px #f2f2f2;">Prepreg</div>
<div class="t" style="left:710px;top:723.90px;font-size:7.5px;line-height:9.0px;color:#f2f2f2;-webkit-text-stroke:0.3px #f2f2f2;">0.1mm</div>
<div class="t" style="left:190px;top:768.90px;font-size:7.5px;line-height:9.0px;color:#f2f2f2;-webkit-text-stroke:0.3px #f2f2f2;">Prepreg</div>
<div class="t" style="left:245px;top:768.90px;font-size:7.5px;line-height:9.0px;color:#f2f2f2;-webkit-text-stroke:0.3px #f2f2f2;">0.1mm</div>
<div class="t" style="left:655px;top:768.90px;font-size:7.5px;line-height:9.0px;color:#f2f2f2;-webkit-text-stroke:0.3px #f2f2f2;">Prepreg</div>
<div class="t" style="left:710px;top:768.90px;font-size:7.5px;line-height:9.0px;color:#f2f2f2;-webkit-text-stroke:0.3px #f2f2f2;">0.1mm</div>
<div class="t" style="left:164.5px;top:813.90px;font-size:7.5px;line-height:9.0px;font-weight:700;color:#f2f2f2;-webkit-text-stroke:0.6px #f2f2f2;">L8</div>
<div class="t" style="left:190px;top:813.90px;font-size:7.5px;line-height:9.0px;color:#f2f2f2;-webkit-text-stroke:0.3px #f2f2f2;">Signal</div>
<div class="t" style="left:245px;top:813.90px;font-size:7.5px;line-height:9.0px;color:#f2f2f2;-webkit-text-stroke:0.3px #f2f2f2;">0.035mm</div>
<div class="t" style="left:629px;top:813.90px;font-size:7.5px;line-height:9.0px;font-weight:700;color:#f2f2f2;-webkit-text-stroke:0.6px #f2f2f2;">L8</div>
<div class="t" style="left:655px;top:813.90px;font-size:7.5px;line-height:9.0px;color:#f2f2f2;-webkit-text-stroke:0.3px #f2f2f2;">Signal</div>
<div class="t" style="left:710px;top:813.90px;font-size:7.5px;line-height:9.0px;color:#f2f2f2;-webkit-text-stroke:0.3px #f2f2f2;">0.035mm</div>
<div class="t" style="left:190px;top:828.90px;font-size:7.5px;line-height:9.0px;color:#f2f2f2;-webkit-text-stroke:0.3px #f2f2f2;">Solder Mask</div>
<div class="t" style="left:245px;top:828.90px;font-size:7.5px;line-height:9.0px;color:#f2f2f2;-webkit-text-stroke:0.3px #f2f2f2;">0.0254mm</div>
<div class="t" style="left:655px;top:828.90px;font-size:7.5px;line-height:9.0px;color:#f2f2f2;-webkit-text-stroke:0.3px #f2f2f2;">Solder Mask</div>
<div class="t" style="left:710px;top:828.90px;font-size:7.5px;line-height:9.0px;color:#f2f2f2;-webkit-text-stroke:0.3px #f2f2f2;">0.0254mm</div>
<div class="t" style="left:406px;top:302.90px;font-size:7.5px;line-height:9.0px;color:#f2f2f2;-webkit-text-stroke:0.3px #f2f2f2;">Coverlay</div>
<div class="t" style="left:461px;top:302.90px;font-size:7.5px;line-height:9.0px;color:#f2f2f2;-webkit-text-stroke:0.3px #f2f2f2;">0.05mm</div>
<div class="t" style="left:380.5px;top:317.90px;font-size:7.5px;line-height:9.0px;font-weight:700;color:#f2f2f2;-webkit-text-stroke:0.6px #f2f2f2;">L1</div>
<div class="t" style="left:406px;top:317.90px;font-size:7.5px;line-height:9.0px;color:#f2f2f2;-webkit-text-stroke:0.3px #f2f2f2;">Signal</div>
<div class="t" style="left:461px;top:317.90px;font-size:7.5px;line-height:9.0px;color:#f2f2f2;-webkit-text-stroke:0.3px #f2f2f2;">0.018mm</div>
<div class="t" style="left:406px;top:332.90px;font-size:7.5px;line-height:9.0px;color:#f2f2f2;-webkit-text-stroke:0.3px #f2f2f2;">Core</div>
<div class="t" style="left:461px;top:332.90px;font-size:7.5px;line-height:9.0px;color:#f2f2f2;-webkit-text-stroke:0.3px #f2f2f2;">0.025mm</div>
<div class="t" style="left:380.5px;top:347.90px;font-size:7.5px;line-height:9.0px;font-weight:700;color:#f2f2f2;-webkit-text-stroke:0.6px #f2f2f2;">L2</div>
<div class="t" style="left:406px;top:347.90px;font-size:7.5px;line-height:9.0px;color:#f2f2f2;-webkit-text-stroke:0.3px #f2f2f2;">Signal</div>
<div class="t" style="left:461px;top:347.90px;font-size:7.5px;line-height:9.0px;color:#f2f2f2;-webkit-text-stroke:0.3px #f2f2f2;">0.018mm</div>
<div class="t" style="left:406px;top:362.90px;font-size:7.5px;line-height:9.0px;color:#f2f2f2;-webkit-text-stroke:0.3px #f2f2f2;">Coverlay</div>
<div class="t" style="left:461px;top:362.90px;font-size:7.5px;line-height:9.0px;color:#f2f2f2;-webkit-text-stroke:0.3px #f2f2f2;">0.05mm</div>
<div class="t" style="left:406px;top:482.90px;font-size:7.5px;line-height:9.0px;color:#f2f2f2;-webkit-text-stroke:0.3px #f2f2f2;">Coverlay</div>
<div class="t" style="left:461px;top:482.90px;font-size:7.5px;line-height:9.0px;color:#f2f2f2;-webkit-text-stroke:0.3px #f2f2f2;">0.05mm</div>
<div class="t" style="left:380.5px;top:497.90px;font-size:7.5px;line-height:9.0px;font-weight:700;color:#f2f2f2;-webkit-text-stroke:0.6px #f2f2f2;">L1</div>
<div class="t" style="left:406px;top:497.90px;font-size:7.5px;line-height:9.0px;color:#f2f2f2;-webkit-text-stroke:0.3px #f2f2f2;">Signal</div>
<div class="t" style="left:461px;top:497.90px;font-size:7.5px;line-height:9.0px;color:#f2f2f2;-webkit-text-stroke:0.3px #f2f2f2;">0.018mm</div>
<div class="t" style="left:406px;top:512.90px;font-size:7.5px;line-height:9.0px;color:#f2f2f2;-webkit-text-stroke:0.3px #f2f2f2;">Core</div>
<div class="t" style="left:461px;top:512.90px;font-size:7.5px;line-height:9.0px;color:#f2f2f2;-webkit-text-stroke:0.3px #f2f2f2;">0.025mm</div>
<div class="t" style="left:380.5px;top:527.90px;font-size:7.5px;line-height:9.0px;font-weight:700;color:#f2f2f2;-webkit-text-stroke:0.6px #f2f2f2;">L2</div>
<div class="t" style="left:406px;top:527.90px;font-size:7.5px;line-height:9.0px;color:#f2f2f2;-webkit-text-stroke:0.3px #f2f2f2;">Signal</div>
<div class="t" style="left:461px;top:527.90px;font-size:7.5px;line-height:9.0px;color:#f2f2f2;-webkit-text-stroke:0.3px #f2f2f2;">0.018mm</div>
<div class="t" style="left:406px;top:542.90px;font-size:7.5px;line-height:9.0px;color:#f2f2f2;-webkit-text-stroke:0.3px #f2f2f2;">Coverlay</div>
<div class="t" style="left:461px;top:542.90px;font-size:7.5px;line-height:9.0px;color:#f2f2f2;-webkit-text-stroke:0.3px #f2f2f2;">0.05mm</div>
<div class="t" style="left:406px;top:663.90px;font-size:7.5px;line-height:9.0px;color:#f2f2f2;-webkit-text-stroke:0.3px #f2f2f2;">Coverlay</div>
<div class="t" style="left:461px;top:663.90px;font-size:7.5px;line-height:9.0px;color:#f2f2f2;-webkit-text-stroke:0.3px #f2f2f2;">0.05mm</div>
<div class="t" style="left:380.5px;top:678.90px;font-size:7.5px;line-height:9.0px;font-weight:700;color:#f2f2f2;-webkit-text-stroke:0.6px #f2f2f2;">L1</div>
<div class="t" style="left:406px;top:678.90px;font-size:7.5px;line-height:9.0px;color:#f2f2f2;-webkit-text-stroke:0.3px #f2f2f2;">Signal</div>
<div class="t" style="left:461px;top:678.90px;font-size:7.5px;line-height:9.0px;color:#f2f2f2;-webkit-text-stroke:0.3px #f2f2f2;">0.018mm</div>
<div class="t" style="left:406px;top:693.90px;font-size:7.5px;line-height:9.0px;color:#f2f2f2;-webkit-text-stroke:0.3px #f2f2f2;">Core</div>
<div class="t" style="left:461px;top:693.90px;font-size:7.5px;line-height:9.0px;color:#f2f2f2;-webkit-text-stroke:0.3px #f2f2f2;">0.025mm</div>
<div class="t" style="left:380.5px;top:708.90px;font-size:7.5px;line-height:9.0px;font-weight:700;color:#f2f2f2;-webkit-text-stroke:0.6px #f2f2f2;">L2</div>
<div class="t" style="left:406px;top:708.90px;font-size:7.5px;line-height:9.0px;color:#f2f2f2;-webkit-text-stroke:0.3px #f2f2f2;">Signal</div>
<div class="t" style="left:461px;top:708.90px;font-size:7.5px;line-height:9.0px;color:#f2f2f2;-webkit-text-stroke:0.3px #f2f2f2;">0.018mm</div>
<div class="t" style="left:406px;top:723.90px;font-size:7.5px;line-height:9.0px;color:#f2f2f2;-webkit-text-stroke:0.3px #f2f2f2;">Coverlay</div>
<div class="t" style="left:461px;top:723.90px;font-size:7.5px;line-height:9.0px;color:#f2f2f2;-webkit-text-stroke:0.3px #f2f2f2;">0.05mm</div>
<div class="t" style="right:1769px;top:212.90px;font-size:7.5px;line-height:9.0px;color:#f2f2f2;-webkit-text-stroke:0.3px #f2f2f2;">Top Layer</div>
<div class="t" style="right:1769px;top:317.90px;font-size:7.5px;line-height:9.0px;color:#f2f2f2;-webkit-text-stroke:0.3px #f2f2f2;">Int1 (Sign)</div>
<div class="t" style="right:1769px;top:347.90px;font-size:7.5px;line-height:9.0px;color:#f2f2f2;-webkit-text-stroke:0.3px #f2f2f2;">Int2 (GND)</div>
<div class="t" style="right:1769px;top:497.90px;font-size:7.5px;line-height:9.0px;color:#f2f2f2;-webkit-text-stroke:0.3px #f2f2f2;">Int3 (Sign)</div>
<div class="t" style="right:1769px;top:527.90px;font-size:7.5px;line-height:9.0px;color:#f2f2f2;-webkit-text-stroke:0.3px #f2f2f2;">Layer 1</div>
<div class="t" style="right:1769px;top:678.90px;font-size:7.5px;line-height:9.0px;color:#f2f2f2;-webkit-text-stroke:0.3px #f2f2f2;">Layer 2</div>
<div class="t" style="right:1769px;top:708.90px;font-size:7.5px;line-height:9.0px;color:#f2f2f2;-webkit-text-stroke:0.3px #f2f2f2;">Layer 3</div>
<div class="t" style="right:1769px;top:813.90px;font-size:7.5px;line-height:9.0px;color:#f2f2f2;-webkit-text-stroke:0.3px #f2f2f2;">Bottom Layer</div>
<div class="r" style="left:375px;top:299px;width:268px;height:77px;background:transparent;border:2px solid #a6d6fd;border-left-width:3px;border-right-width:3px;"></div>
<div class="r" style="left:804px;top:299px;width:318px;height:78px;opacity:0.7">
<div class="r" style="left:18px;top:2px;width:232px;height:14px;background:#008000;"></div>
<div class="r" style="left:18px;top:16px;width:232px;height:15px;background:#c87d4e;"></div>
<div class="r" style="left:18px;top:31px;width:232px;height:15px;background:#5a5649;"></div>
<div class="r" style="left:18px;top:46px;width:232px;height:15px;background:#c87d4e;"></div>
<div class="r" style="left:18px;top:61px;width:232px;height:15px;background:#008000;"></div>
<div class="r" style="left:0px;top:0px;width:268px;height:77px;background:transparent;border:2px solid #a6d6fd;border-left-width:3px;border-right-width:3px;"></div>
</div>
<div class="r" style="left:804px;top:299px;width:318px;height:78px;opacity:0.8">
<div class="t" style="left:48px;top:2.90px;font-size:7.5px;line-height:9.0px;color:#f2f2f2;-webkit-text-stroke:0.3px #f2f2f2;">Coverlay</div>
<div class="t" style="left:103px;top:2.90px;font-size:7.5px;line-height:9.0px;color:#f2f2f2;-webkit-text-stroke:0.3px #f2f2f2;">0.05mm</div>
<div class="t" style="left:22px;top:17.90px;font-size:7.5px;line-height:9.0px;font-weight:700;color:#f8f0e8;-webkit-text-stroke:0.6px #f8f0e8;">L1</div>
<div class="t" style="left:48px;top:17.90px;font-size:7.5px;line-height:9.0px;color:#f2f2f2;-webkit-text-stroke:0.3px #f2f2f2;">Signal</div>
<div class="t" style="left:103px;top:17.90px;font-size:7.5px;line-height:9.0px;color:#f2f2f2;-webkit-text-stroke:0.3px #f2f2f2;">0.018mm</div>
<div class="t" style="left:48px;top:32.90px;font-size:7.5px;line-height:9.0px;color:#f2f2f2;-webkit-text-stroke:0.3px #f2f2f2;">Core</div>
<div class="t" style="left:103px;top:32.90px;font-size:7.5px;line-height:9.0px;color:#f2f2f2;-webkit-text-stroke:0.3px #f2f2f2;">0.025mm</div>
<div class="t" style="left:22px;top:47.90px;font-size:7.5px;line-height:9.0px;font-weight:700;color:#f8f0e8;-webkit-text-stroke:0.6px #f8f0e8;">L2</div>
<div class="t" style="left:48px;top:47.90px;font-size:7.5px;line-height:9.0px;color:#f2f2f2;-webkit-text-stroke:0.3px #f2f2f2;">Signal</div>
<div class="t" style="left:103px;top:47.90px;font-size:7.5px;line-height:9.0px;color:#f2f2f2;-webkit-text-stroke:0.3px #f2f2f2;">0.018mm</div>
<div class="t" style="left:48px;top:62.90px;font-size:7.5px;line-height:9.0px;color:#f2f2f2;-webkit-text-stroke:0.3px #f2f2f2;">Coverlay</div>
<div class="t" style="left:103px;top:62.90px;font-size:7.5px;line-height:9.0px;color:#f2f2f2;-webkit-text-stroke:0.3px #f2f2f2;">0.05mm</div>
</div>
<svg style="left:822px;top:349px" width="13" height="21"><path d="M0.5 0.5V16L4.2 12.4L6.9 18.2L9.2 17.2L6.6 11.5H11.6Z" fill="#fff" stroke="#000" stroke-width="1.1" stroke-linejoin="round"/></svg>
<div class="r" style="left:32px;top:1012px;width:1322px;height:20px;background:#333333;"></div>
<div class="r" style="left:34px;top:1012px;width:42px;height:17px;background:#474747;border-radius:0 0 4px 4px;border:1px solid #2c2c2c;border-top:none;"></div>
<div class="t" style="left:40px;top:1015.12px;font-size:11.5px;line-height:13.8px;color:#e8e8e8;">Board</div>
<div class="r" style="left:32px;top:1030px;width:1321px;height:1px;background:#3c3c3c;"></div>
<div class="r" style="left:1352px;top:1012px;width:1px;height:19px;background:#3c3c3c;"></div>
<div class="r" style="left:1358px;top:52px;width:559px;height:961px;background:#404040;"></div>
<div class="r" style="left:1358px;top:52px;width:559px;height:23px;background:#4d4d4d;"></div>
<div class="t" style="left:1363px;top:55.64px;font-size:12px;line-height:14.4px;font-weight:700;color:#ececec;">Properties</div>
<svg style="left:1870px;top:60px" width="9" height="7"><path d="M0.5 0.5H8.5L4.5 6.5Z" fill="#f0f0f0"/></svg>
<svg style="left:1886px;top:58px" width="9" height="11"><path d="M2 0.5H7V6H8.5V7.2H0.5V6H2Z" fill="#f0f0f0"/><rect x="4" y="7" width="1.2" height="4" fill="#f0f0f0"/><rect x="4.6" y="1" width="1.2" height="5" fill="#4d4d4d"/></svg>
<svg style="left:1902px;top:59px" width="9" height="9"><path d="M1 1L8 8M8 1L1 8" stroke="#f0f0f0" stroke-width="1.9"/></svg>
<div class="t" style="left:1366px;top:84.59px;font-size:11px;line-height:13.2px;color:#e0e0e0;">Layer Stack Manager</div>
<div class="r" style="left:1366px;top:109px;width:543px;height:21px;background:#2c2c2c;border:1px solid #262626;border-radius:3px;"></div>
<svg style="left:1373px;top:113px" width="12" height="12"><circle cx="5" cy="5" r="3.6" fill="none" stroke="#a8a8a8" stroke-width="1.6"/><line x1="7.6" y1="7.6" x2="10.5" y2="10.5" stroke="#a8a8a8" stroke-width="1.9"/></svg>
<div class="t" style="left:1392px;top:112.59px;font-size:11px;line-height:13.2px;color:#dcdcdc;">Search</div>
<svg style="left:1366px;top:153px" width="6" height="6"><path d="M5.5 0V5.5H0Z" fill="#e8e8e8"/></svg>
<div class="t" style="left:1375px;top:151.06px;font-size:10.5px;line-height:12.6px;font-weight:700;color:#ececec;">Branch</div>
<div class="r" style="left:1366px;top:169px;width:541px;height:104px;background:#484848;border-radius:4px;border:1px solid #3c3c3c;"></div>
<div class="t" style="right:435px;top:184.59px;font-size:11px;line-height:13.2px;color:#dcdcdc;">Branch Name</div>
<div class="r" style="left:1498px;top:181px;width:401px;height:21px;background:#2c2c2c;border:1px solid #262626;border-radius:3px;"></div>
<div class="t" style="left:1504px;top:185.59px;font-size:11px;line-height:13.2px;color:#f0f0f0;">Board</div>
<div class="t" style="right:435px;top:208.59px;font-size:11px;line-height:13.2px;color:#dcdcdc;">Status</div>
<svg style="left:1497px;top:207px" width="16" height="16"><circle cx="8" cy="8" r="6.5" fill="none" stroke="#2fb350" stroke-width="1.4"/><path d="M4.8 8.2L7.2 10.5L11.2 5.8" fill="none" stroke="#2fb350" stroke-width="1.3"/></svg>
<div class="t" style="left:1517px;top:209.12px;font-size:11.5px;line-height:13.8px;color:#e8e8e8;">Match</div>
<div class="r" style="left:1388px;top:233px;width:513px;height:1px;background:#2e2e2e;"></div>
<div class="t" style="right:435px;top:248.59px;font-size:11px;line-height:13.2px;color:#dcdcdc;">Realistic Ratio</div>
<div class="r" style="left:1498px;top:247px;width:17px;height:17px;background:#3a3a3a;border:1px solid #262626;border-radius:3px;"></div>
<svg style="left:1501px;top:251px" width="11" height="9"><path d="M1 4.5L4 7.5L10 1.5" fill="none" stroke="#e8e8e8" stroke-width="1.3"/></svg>
<svg style="left:1366px;top:290px" width="6" height="6"><path d="M5.5 0V5.5H0Z" fill="#e8e8e8"/></svg>
<div class="t" style="left:1375px;top:288.06px;font-size:10.5px;line-height:12.6px;font-weight:700;color:#ececec;">Substack</div>
<div class="r" style="left:1366px;top:306px;width:541px;height:293px;background:#484848;border-radius:4px;border:1px solid #3c3c3c;"></div>
<div class="t" style="right:454px;top:318.59px;font-size:11px;line-height:13.2px;color:#dcdcdc;">Name</div>
<div class="r" style="left:1478px;top:314px;width:423px;height:21px;background:#2c2c2c;border:1px solid #262626;border-radius:3px;"></div>
<div class="t" style="left:1484px;top:317.64px;font-size:12px;line-height:14.4px;color:#f0f0f0;">flex top</div>
<div class="t" style="right:454px;top:342.12px;font-size:11.5px;line-height:13.8px;color:#dcdcdc;">Description</div>
<div class="r" style="left:1478px;top:338px;width:423px;height:50px;background:#2c2c2c;border:1px solid #262626;border-radius:3px;"></div>
<div class="r" style="left:1388px;top:396px;width:513px;height:1px;background:#2e2e2e;"></div>
<div class="t" style="right:454px;top:412.12px;font-size:11.5px;line-height:13.8px;color:#dcdcdc;">Material Usage</div>
<div class="r" style="left:1478px;top:406px;width:423px;height:23px;background:#535353;border:1px solid #2a2a2a;border-radius:3px;"></div>
<div class="r" style="left:1690px;top:407px;width:210px;height:21px;background:#6384a7;border-radius:0 3px 3px 0;border-left:1px solid #2a2a2a;"></div>
<div class="t" style="left:1284px;width:600px;text-align:center;top:411.30px;font-size:11.3px;line-height:13.56px;color:#ececec;">Common</div>
<div class="t" style="left:1495px;width:600px;text-align:center;top:410.64px;font-size:12px;line-height:14.4px;color:#f4f4f4;">Individual</div>
<div class="t" style="left:1388px;top:436.59px;font-size:11px;line-height:13.2px;font-weight:700;color:#ececec;">Intrusion Left</div>
<div class="r" style="left:1466px;top:443px;width:435px;height:1px;background:#2e2e2e;"></div>
<div class="t" style="right:454px;top:465.12px;font-size:11.5px;line-height:13.8px;color:#f0f0f0;">Top</div>
<div class="r" style="left:1478px;top:460px;width:393px;height:21px;background:#2c2c2c;border:1px solid #262626;border-radius:3px;"></div>
<div class="t" style="left:1484px;top:464.59px;font-size:11px;line-height:13.2px;color:#f0f0f0;">3mm</div>
<div class="t" style="right:454px;top:492.12px;font-size:11.5px;line-height:13.8px;color:#8c8c8c;">Bottom</div>
<div class="r" style="left:1478px;top:486px;width:393px;height:21px;background:#474747;border:1px solid #3c3c3c;border-radius:3px;"></div>
<div class="t" style="left:1484px;top:490.59px;font-size:11px;line-height:13.2px;color:#8a8a8a;">3mm</div>
<div class="r" style="left:1877px;top:458px;width:24px;height:52px;background:#535353;border:1px solid #2a2a2a;border-radius:3px;"></div>
<svg style="left:1884px;top:475px" width="10" height="17"><path d="M1.5 7.5V4.5A3.5 3.5 0 0 1 8.5 4.5V7.5M1.5 9V11.5A3.5 3.5 0 0 0 8.5 11.5V9" fill="none" stroke="#f4f4f4" stroke-width="2"/><line x1="5" y1="5" x2="5" y2="11.5" stroke="#f4f4f4" stroke-width="1.6" stroke-linecap="round"/></svg>
<div class="t" style="left:1388px;top:517.59px;font-size:11px;line-height:13.2px;font-weight:700;color:#ececec;">Intrusion Right</div>
<div class="r" style="left:1466px;top:524px;width:435px;height:1px;background:#2e2e2e;"></div>
<div class="t" style="right:454px;top:546.12px;font-size:11.5px;line-height:13.8px;color:#f0f0f0;">Top</div>
<div class="r" style="left:1478px;top:541px;width:393px;height:21px;background:#2c2c2c;border:1px solid #262626;border-radius:3px;"></div>
<div class="t" style="left:1484px;top:545.59px;font-size:11px;line-height:13.2px;color:#f0f0f0;">3mm</div>
<div class="t" style="right:454px;top:573.12px;font-size:11.5px;line-height:13.8px;color:#8c8c8c;">Bottom</div>
<div class="r" style="left:1478px;top:567px;width:393px;height:21px;background:#474747;border:1px solid #3c3c3c;border-radius:3px;"></div>
<div class="t" style="left:1484px;top:571.59px;font-size:11px;line-height:13.2px;color:#8a8a8a;">3mm</div>
<div class="r" style="left:1877px;top:539px;width:24px;height:52px;background:#535353;border:1px solid #2a2a2a;border-radius:3px;"></div>
<svg style="left:1884px;top:556px" width="10" height="17"><path d="M1.5 7.5V4.5A3.5 3.5 0 0 1 8.5 4.5V7.5M1.5 9V11.5A3.5 3.5 0 0 0 8.5 11.5V9" fill="none" stroke="#f4f4f4" stroke-width="2"/><line x1="5" y1="5" x2="5" y2="11.5" stroke="#f4f4f4" stroke-width="1.6" stroke-linecap="round"/></svg>
<div class="t" style="left:1361px;top:1001.12px;font-size:11.5px;line-height:13.8px;color:#e0e0e0;">1 object is selected</div>
<div class="r" style="left:1354px;top:1013px;width:566px;height:23px;background:#383838;"></div>
<div class="r" style="left:1358px;top:1013px;width:103px;height:19px;background:#3a3a3a;border-radius:0 0 4px 4px;border:1px solid #2a2a2a;"></div>
<div class="t" style="left:1365px;top:1017.12px;font-size:11.5px;line-height:13.8px;color:#e0e0e0;">Storage Manager</div>
<div class="r" style="left:1461px;top:1013px;width:51px;height:19px;background:#3a3a3a;border-radius:0 0 4px 4px;border:1px solid #2a2a2a;"></div>
<div class="t" style="left:1467px;top:1017.12px;font-size:11.5px;line-height:13.8px;color:#e0e0e0;">Output</div>
<div class="r" style="left:1512px;top:1013px;width:79px;height:19px;background:#3a3a3a;border-radius:0 0 4px 4px;border:1px solid #2a2a2a;"></div>
<div class="t" style="left:1518px;top:1017.12px;font-size:11.5px;line-height:13.8px;color:#e0e0e0;">Components</div>
<div class="r" style="left:1591px;top:1013px;width:143px;height:19px;background:#3a3a3a;border-radius:0 0 4px 4px;border:1px solid #2a2a2a;"></div>
<div class="t" style="left:1597px;top:1017.12px;font-size:11.5px;line-height:13.8px;color:#e0e0e0;">Manufacturer Part Search</div>
<div class="r" style="left:1734px;top:1013px;width:64px;height:19px;background:#424242;border-radius:0 0 4px 4px;border:1px solid #2c2c2c;border-top:none;"></div>
<div class="t" style="left:1740px;top:1017.12px;font-size:11.5px;line-height:13.8px;color:#e0e0e0;">Properties</div>
<div class="r" style="left:1798px;top:1013px;width:64px;height:19px;background:#3a3a3a;border-radius:0 0 4px 4px;border:1px solid #2a2a2a;"></div>
<div class="t" style="left:1805px;top:1017.59px;font-size:11px;line-height:13.2px;color:#e0e0e0;">Messages</div>
<div class="r" style="left:0px;top:1036px;width:1920px;height:44px;background:#404040;"></div>
<div class="t" style="left:5px;top:1042.06px;font-size:10.5px;line-height:12.6px;color:#e0e0e0;">X:22.5mm Y:105mm</div>
<div class="t" style="left:112px;top:1041.59px;font-size:11px;line-height:13.2px;color:#e0e0e0;">Grid: 2.5mm</div>
<div class="t" style="left:194px;top:1041.12px;font-size:11.5px;line-height:13.8px;color:#e0e0e0;">(Hotspot Snap)</div>
<div class="r" style="left:486px;top:1041px;width:1px;height:17px;background:#2a2a2a;"></div>
<div class="r" style="left:972px;top:1041px;width:1px;height:17px;background:#2a2a2a;"></div>
<div class="t" style="left:5px;top:1063.12px;font-size:11.5px;line-height:13.8px;color:#e0e0e0;">Idle state - ready for command</div>
<div class="r" style="left:1871px;top:1040px;width:45px;height:18px;background:#4a4a4a;border:1px solid #2a2a2a;border-radius:3px;"></div>
<div class="t" style="left:1877px;top:1042.59px;font-size:11px;line-height:13.2px;color:#e8e8e8;">Panels</div>
</body></html>
